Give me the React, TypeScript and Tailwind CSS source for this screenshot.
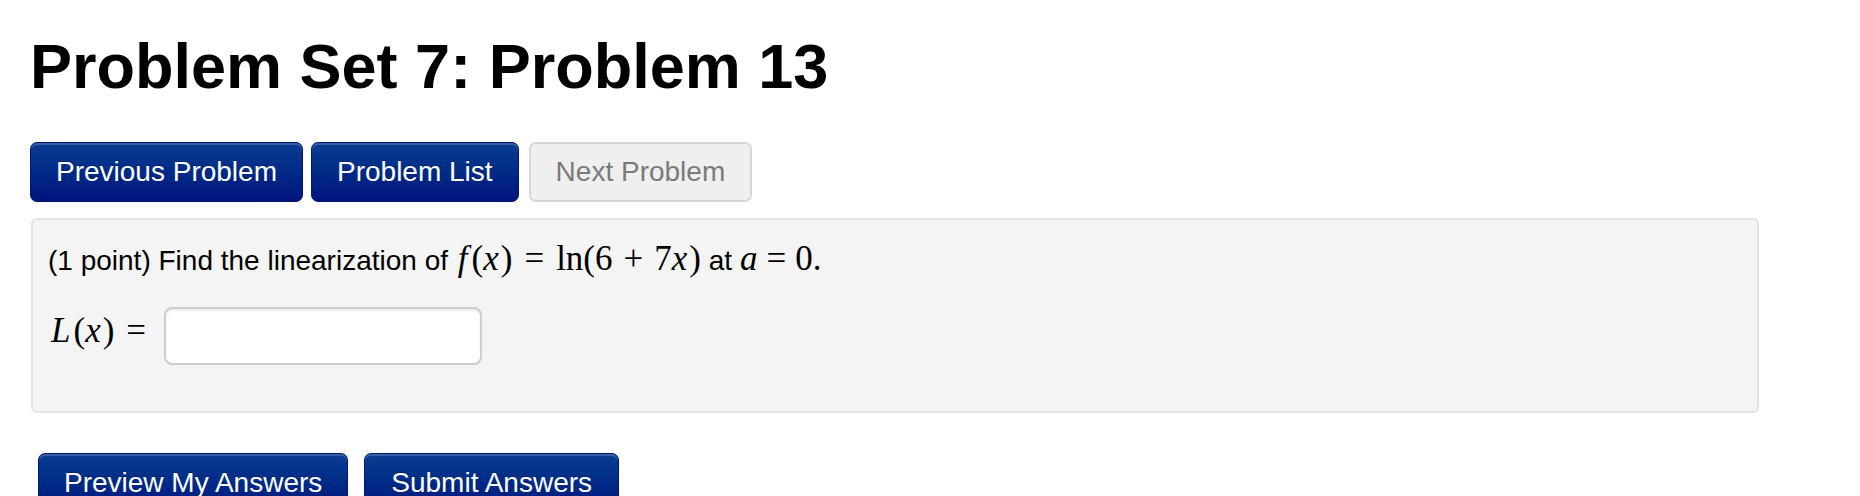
import React from "react";

const sans = "font-['Liberation_Sans',Arial,sans-serif]";
const serif = "font-['Liberation_Serif','Times_New_Roman',serif]";

const PrimaryButton: React.FC<{ label: string; wide?: boolean }> = ({ label, wide }) => (
  <button
    className={`${sans} text-[28px] leading-[32px] py-[13px] ${wide ? "px-[26px]" : "px-[25px]"} text-white rounded-[7px] border border-[#00196b] bg-linear-to-b from-[#0b3d91] to-[#00127d] shadow-[inset_0_2px_0_rgba(255,255,255,0.18)] [text-shadow:0_-1px_0_rgba(0,0,0,0.25)]`}
  >
    {label}
  </button>
);

const DisabledButton: React.FC<{ label: string }> = ({ label }) => (
  <button
    disabled
    className={`${sans} text-[28px] leading-[32px] py-[12px] px-[25px] text-[#7a7a7a] rounded-[7px] border-2 border-[#d6d6d6] bg-[#efefef] cursor-not-allowed`}
  >
    {label}
  </button>
);

export default function App() {
  return (
    <div className={`${sans} bg-white w-[1860px] h-[496px] overflow-hidden pl-[30px] pt-[30px] text-black`}>
      {/* Title */}
      <h1 className="text-[63px] leading-[72px] font-bold">Problem Set 7: Problem 13</h1>

      {/* Navigation */}
      <div className="flex items-start gap-[8px] mt-[40px]">
        <PrimaryButton label="Previous Problem" />
        <PrimaryButton label="Problem List" />
        <div className="ml-[2px]">
          <DisabledButton label="Next Problem" />
        </div>
      </div>

      {/* Problem body */}
      <div className="mt-[16px] ml-[1px] w-[1728px] bg-[#f4f4f4] border-2 border-[#e3e3e3] rounded-[6px] pl-[15px] pt-[21px] pb-[46px]">
        <p className="text-[28px] leading-[40px]">
          (1 point) Find the linearization of{" "}
          <span className={`${serif} text-[35px] leading-[34px]`}>
            <i className="ml-[2px] mr-[4px]">f</i>(<i className="mr-[2px]">x</i>)
            <span className="mx-[12px]">=</span>
            ln(6<span className="mx-[11px]">+</span>7<i className="mr-[2px]">x</i>)
          </span>{" "}
          at{" "}
          <span className={`${serif} text-[35px] leading-[34px]`}>
            <i>a</i>
            <span className="mx-[9px]">=</span>0.
          </span>
        </p>

        <div className="flex items-start mt-[26px]">
          <span className={`${serif} text-[35px] leading-[35px] mt-[6px] ml-[3px]`}>
            <i className="mr-[3px]">L</i>(<i className="mr-[2px]">x</i>)
            <span className="ml-[12px]">=</span>
          </span>
          <input
            type="text"
            className="ml-[18px] w-[318px] h-[58px] bg-white border-2 border-[#cdcdcd] rounded-[8px] shadow-[inset_0_2px_2px_rgba(0,0,0,0.075)] outline-none px-[10px] text-[28px]"
          />
        </div>
      </div>

      {/* Submit */}
      <div className="flex items-start gap-[16px] mt-[40px] ml-[8px]">
        <PrimaryButton label="Preview My Answers" />
        <PrimaryButton label="Submit Answers" wide />
      </div>
    </div>
  );
}
